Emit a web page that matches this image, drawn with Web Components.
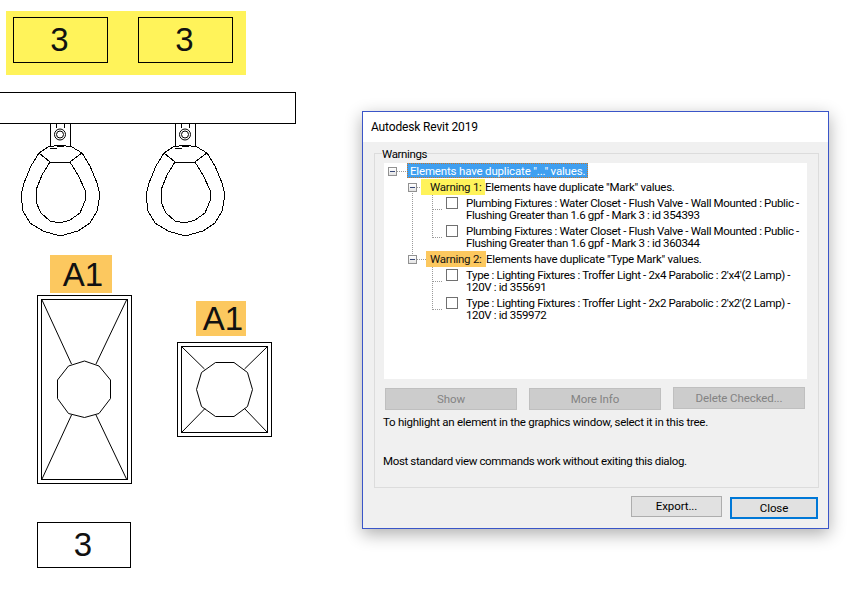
<!DOCTYPE html>
<html>
<head>
<meta charset="utf-8">
<title>Autodesk Revit 2019</title>
<style>
html, body { margin: 0; padding: 0; background: #fff; overflow: hidden; }
cad-sheet { width: 858px; height: 596px; }
</style>
</head>
<body>
<cad-sheet>
  <yellow-patch style="left:6px;top:11px">
    <mark-tag style="width:95px;height:46px">3</mark-tag>
    <mark-tag style="width:95px;height:46px">3</mark-tag>
  </yellow-patch>
  <cad-bar style="left:-1px;top:92px;width:297px;height:32px"></cad-bar>
  <cad-toilet style="left:10px;top:124px"></cad-toilet>
  <cad-toilet style="left:135px;top:124px"></cad-toilet>
  <type-tag style="left:50px;top:255px;width:62px;height:38px">A1</type-tag>
  <cad-troffer kind="long" style="left:37px;top:295px"></cad-troffer>
  <type-tag style="left:196px;top:301px;width:50px;height:35px">A1</type-tag>
  <cad-troffer kind="square" style="left:177px;top:342px"></cad-troffer>
  <mark-tag style="left:37px;top:522px;width:94px;height:46px">3</mark-tag>

  <revit-dialog style="left:362px;top:111px" heading="Autodesk Revit 2019">
    <warning-tree>
      <tree-row level="0" selected toggle>Elements have duplicate "..." values.</tree-row>
      <tree-row level="1" toggle tint="#fff35a" lead="9" tagw="64" label="Warning 1:">Elements have duplicate "Mark" values.</tree-row>
      <tree-row level="2" check>Plumbing Fixtures : Water Closet - Flush Valve - Wall Mounted : Public -<br>Flushing Greater than 1.6 gpf - Mark 3 : id 354393</tree-row>
      <tree-row level="2" check>Plumbing Fixtures : Water Closet - Flush Valve - Wall Mounted : Public -<br>Flushing Greater than 1.6 gpf - Mark 3 : id 360344</tree-row>
      <tree-row level="1" toggle tint="#fcc85f" lead="4" tagw="60" label="Warning 2:">Elements have duplicate "Type Mark" values.</tree-row>
      <tree-row level="2" check>Type : Lighting Fixtures : Troffer Light - 2x4 Parabolic : 2'x4'(2 Lamp) -<br>120V : id 355691</tree-row>
      <tree-row level="2" check>Type : Lighting Fixtures : Troffer Light - 2x2 Parabolic : 2'x2'(2 Lamp) -<br>120V : id 359972</tree-row>
    </warning-tree>
  </revit-dialog>
</cad-sheet>

<script>
'use strict';
(function (){

class CadSheet extends HTMLElement {
    constructor(){
        super();
        this.attachShadow({mode:'open'}).innerHTML = `
        <style>
        :host{ display:block; position:relative; overflow:hidden; font-family:"Liberation Sans",Arial,sans-serif; color:#000; }
        ::slotted(*){ position:absolute; }
        </style>
        <slot></slot>`;
    }
}

class YellowPatch extends HTMLElement {
    constructor(){
        super();
        this.attachShadow({mode:'open'}).innerHTML = `
        <style>
        :host{ display:flex; gap:30px; box-sizing:border-box; width:240px; height:64px; padding:6px 7px; background:#fff35a; }
        </style>
        <slot></slot>`;
    }
}

class MarkTag extends HTMLElement {
    constructor(){
        super();
        this.attachShadow({mode:'open'}).innerHTML = `
        <style>
        :host{ display:flex; align-items:center; justify-content:center; box-sizing:border-box; padding:0 2px 2px 0; border:1px solid #000; font-size:33px; line-height:1; color:#111; }
        </style>
        <slot></slot>`;
    }
}

class TypeTag extends HTMLElement {
    constructor(){
        super();
        this.attachShadow({mode:'open'}).innerHTML = `
        <style>
        :host{ display:flex; align-items:center; justify-content:center; box-sizing:border-box; padding-left:4px; background:#fcc85f; font-size:33px; line-height:1; color:#111; }
        </style>
        <slot></slot>`;
    }
}

class CadBar extends HTMLElement {
    constructor(){
        super();
        this.attachShadow({mode:'open'}).innerHTML = `
        <style>
        :host{ display:block; box-sizing:border-box; border:1px solid #000; background:#fff; }
        </style>`;
    }
}

class CadToilet extends HTMLElement {
    constructor(){
        super();
        // coordinates are px from the top left of the fixture
        this.attachShadow({mode:'open'}).innerHTML = `
        <style>
        :host{ display:block; width:92px; height:116px; }
        svg{ display:block; }
        </style>
        <svg width="92" height="116" viewBox="0 0 92 116" fill="none" stroke="#000" stroke-width="1" shape-rendering="crispEdges">
          <path d="M40.5 0V22M60.5 0V22M46.5 0V4M54.5 0V4"/>
          <circle cx="50" cy="10.5" r="5.5" shape-rendering="auto"/>
          <circle cx="50" cy="10.5" r="3.5" shape-rendering="auto"/>
          <path d="M50 21 62 23 72 29 80 42 87 59 90 71 87 87 80 99 68 107 50 112 33 107 20 99 13 87 11 71 14 59 21 42 29 29 38 23Z"/>
          <path d="M40 38H60L68 51 75 66V77L70 89 60 96 50 99 40 97 31 89 26 78V66L32 51Z"/>
          <path d="M29 29 40 38M72 29 60 38M40 25 47 24"/>
          <path d="M46.500 21.500H54" stroke-width="2"/>
        </svg>`;
    }
}

class CadTroffer extends HTMLElement {
    constructor(){
        super();
        const shapes = {
            long: {w:95, h:189,
                poly:'47.500,66 62,71 73.500,85 73.500,103.500 62,118.500 47.500,122.500 31.500,118.500 20.500,103.500 20.500,85 31.500,71',
                spokes:'M5 5 34.500 69M89.500 5 59 69M5 184 34.500 120M89.500 184 59 120'},
            square: {w:95, h:95,
                poly:'38.500,20.500 57,20.500 70.500,30.500 75.500,47.500 70.500,64.500 57,74.500 38.500,74.500 24.500,64.500 19.500,47.500 24.500,30.500',
                spokes:'M5 5 27.500 27M90 5 67.500 27M5 90 28 66.500M90 90 67.500 66.500'}
        };
        const s = shapes[this.getAttribute('kind')];
        this.attachShadow({mode:'open'}).innerHTML = `
        <style>
        :host{ display:block; box-sizing:border-box; width:${s.w}px; height:${s.h}px; border:1px solid #000; padding:3px; }
        svg{ display:block; position:absolute; left:-1px; top:-1px; }
        .inner{ box-sizing:border-box; width:100%; height:100%; border:1px solid #000; }
        </style>
        <div class="inner"></div>
        <svg width="${s.w}" height="${s.h}" viewBox="0 0 ${s.w} ${s.h}" fill="none" stroke="#000" stroke-width="1">
          <polygon points="${s.poly}"/>
          <path d="${s.spokes}"/>
        </svg>`;
    }
}

class WinButton extends HTMLElement {
    constructor(){
        super();
        this.attachShadow({mode:'open'}).innerHTML = `
        <style>
        :host{ display:flex; align-items:center; justify-content:center; box-sizing:border-box; height:22px; border:1px solid #adadad; background:#e1e1e1; color:#000; letter-spacing:-.1px; }
        :host([disabled]){ width:132px; background:#ccc; border-color:#bfbfbf; color:#838383; }
        :host([primary]){ border:2px solid #0078d7; }
        </style>
        <slot></slot>`;
    }
}

class TreeRow extends HTMLElement {
    constructor(){
        super();
        const level = Number(this.getAttribute('level'));
        const lead = Number(this.getAttribute('lead') || 0);
        const tagw = Number(this.getAttribute('tagw') || 0);
        const label = this.getAttribute('label');
        const tint = this.getAttribute('tint');
        const left = {0:4, 1:24, 2:62}[level];
        const shadow = this.attachShadow({mode:'open'});
        shadow.innerHTML = `
        <style>
        :host{ display:flex; align-items:flex-start; box-sizing:border-box; min-height:16px; padding-left:${left}px; line-height:12px; white-space:nowrap; }
        :host([check]){ padding-top:2px; padding-bottom:2px; }
        :host([toggle]){ letter-spacing:-.26px; }
        :host([selected]){ letter-spacing:-.17px; }
        .toggle{ box-sizing:border-box; flex:none; width:9px; height:9px; margin-top:4px; border:1px solid #919191; background:linear-gradient(#fff,#e4e4e4); display:flex; align-items:center; justify-content:center; }
        .toggle i{ display:block; width:5px; height:1px; background:#3a4a78; }
        .check{ box-sizing:border-box; flex:none; width:12px; height:12px; margin-right:8px; border:1px solid #707070; background:#fff; }
        .sel{ box-sizing:border-box; height:15px; margin-left:10px; padding:0 3px; line-height:16px; background:#3f9ff0; color:#fff; outline:1px dotted #c9772a; outline-offset:-1px; }
        .text{ display:block; height:16px; line-height:16px; margin-left:${13 - lead}px; }
        .tag{ display:inline-block; box-sizing:border-box; width:${tagw}px; height:16px; vertical-align:top; background:${tint}; color:#111; padding-left:${lead}px; }
        </style>`;
        if (this.hasAttribute('toggle')){
            shadow.innerHTML += `<span class="toggle"><i></i></span>`;
        }
        if (this.hasAttribute('check')){
            shadow.innerHTML += `<span class="check"></span>`;
        }
        if (this.hasAttribute('selected')){
            shadow.innerHTML += `<span class="sel"><slot></slot></span>`;
        } else if (label){
            shadow.innerHTML += `<span class="text"><span class="tag">${label}</span><slot></slot></span>`;
        } else {
            shadow.innerHTML += `<span><slot></slot></span>`;
        }
    }
}

class WarningTree extends HTMLElement {
    constructor(){
        super();
        // dotted connectors in tree coordinates
        this.attachShadow({mode:'open'}).innerHTML = `
        <style>
        :host{ display:block; position:relative; box-sizing:border-box; height:216px; background:#fff; }
        svg{ position:absolute; left:0; top:0; }
        </style>
        <svg width="423" height="216" fill="none" stroke="#9a9a9a" stroke-dasharray="1 1" shape-rendering="crispEdges">
          <path d="M13 8.500H23M33 24.500H37M28.500 30V91M33 96.500H42"/>
          <path d="M48.500 32V74.500M48.500 46.500H59M48.500 74.500H59"/>
          <path d="M48.500 104V146.500M48.500 118.500H59M48.500 146.500H59"/>
        </svg>
        <slot></slot>`;
    }
}

class RevitDialog extends HTMLElement {
    constructor(){
        super();
        const heading = this.getAttribute('heading');
        this.attachShadow({mode:'open'}).innerHTML = `
        <style>
        :host{ display:flex; flex-direction:column; box-sizing:border-box; width:467px; height:418px; border:1px solid #3a55c8; background:#f0f0f0; box-shadow:0 5px 16px rgba(0,0,0,.32); font:11.500px/13px Roboto,"Liberation Sans",sans-serif; letter-spacing:-.36px; color:#000; }
        .title{ flex:none; height:30px; padding-left:8px; display:flex; align-items:center; background:#fff; font-size:12px; letter-spacing:-.15px; }
        .body{ flex:1; display:flex; flex-direction:column; padding:7px 10px 10px 11px; }
        fieldset{ flex:none; box-sizing:border-box; min-width:0; width:445px; height:339px; margin:0; padding:5px 11px 0 9px; border:1px solid #dcdcdc; }
        legend{ padding:0; margin-left:-2px; line-height:11px; height:9px; }
        .row{ display:flex; gap:12px; margin-top:9px; padding-left:1px; }
        .hint{ margin:5px 0 0 -1px; line-height:14px; letter-spacing:-.26px; }
        .hint + .hint{ margin-top:25px; letter-spacing:-.36px; }
        .foot{ display:flex; justify-content:flex-end; align-items:flex-start; gap:8px; margin-top:8px; }
        </style>
        <div class="title">${heading}</div>
        <div class="body">
          <fieldset>
            <legend>Warnings</legend>
            <slot></slot>
            <div class="row">
              <win-button disabled>Show</win-button>
              <win-button disabled>More Info</win-button>
              <win-button disabled style="margin-top:-1px">Delete Checked...</win-button>
            </div>
            <p class="hint">To highlight an element in the graphics window, select it in this tree.</p>
            <p class="hint">Most standard view commands work without exiting this dialog.</p>
          </fieldset>
          <div class="foot">
            <win-button style="width:91px;height:21px">Export...</win-button>
            <win-button primary style="width:88px;margin-top:1px">Close</win-button>
          </div>
        </div>`;
    }
}

customElements.define('cad-sheet', CadSheet);
customElements.define('yellow-patch', YellowPatch);
customElements.define('mark-tag', MarkTag);
customElements.define('type-tag', TypeTag);
customElements.define('cad-bar', CadBar);
customElements.define('cad-toilet', CadToilet);
customElements.define('cad-troffer', CadTroffer);
customElements.define('win-button', WinButton);
customElements.define('tree-row', TreeRow);
customElements.define('warning-tree', WarningTree);
customElements.define('revit-dialog', RevitDialog);
})();
</script>
</body>
</html>
